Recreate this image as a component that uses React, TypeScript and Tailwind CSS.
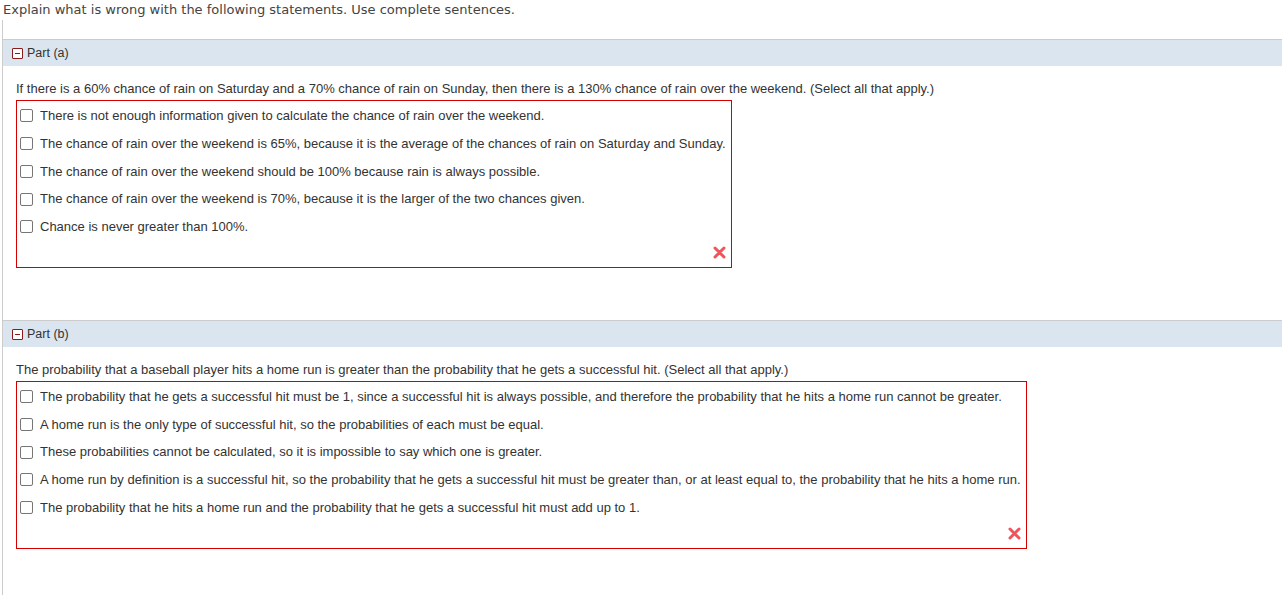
import React from 'react';

interface Part {
  label: string;
  question: string;
  options: string[];
}

const PARTS: Part[] = [
  {
    label: 'Part (a)',
    question:
      'If there is a 60% chance of rain on Saturday and a 70% chance of rain on Sunday, then there is a 130% chance of rain over the weekend. (Select all that apply.)',
    options: [
      'There is not enough information given to calculate the chance of rain over the weekend.',
      'The chance of rain over the weekend is 65%, because it is the average of the chances of rain on Saturday and Sunday.',
      'The chance of rain over the weekend should be 100% because rain is always possible.',
      'The chance of rain over the weekend is 70%, because it is the larger of the two chances given.',
      'Chance is never greater than 100%.',
    ],
  },
  {
    label: 'Part (b)',
    question:
      'The probability that a baseball player hits a home run is greater than the probability that he gets a successful hit. (Select all that apply.)',
    options: [
      'The probability that he gets a successful hit must be 1, since a successful hit is always possible, and therefore the probability that he hits a home run cannot be greater.',
      'A home run is the only type of successful hit, so the probabilities of each must be equal.',
      'These probabilities cannot be calculated, so it is impossible to say which one is greater.',
      'A home run by definition is a successful hit, so the probability that he gets a successful hit must be greater than, or at least equal to, the probability that he hits a home run.',
      'The probability that he hits a home run and the probability that he gets a successful hit must add up to 1.',
    ],
  },
];

function MinusBox() {
  return (
    <span className="flex h-[11px] w-[11px] items-center justify-center rounded-[1px] border border-[#8b1a1a] bg-white">
      <span className="h-[1px] w-[5px] bg-[#8b1a1a]" />
    </span>
  );
}

function WrongMark() {
  return (
    <svg width="13" height="13" viewBox="0 0 13 13">
      <path d="M2 2 L11 11 M11 2 L2 11" stroke="#f0545c" strokeWidth="3" strokeLinecap="round" />
    </svg>
  );
}

function PartBlock({ part }: { part: Part }) {
  return (
    <div>
      <div className="flex h-[27px] items-center gap-[4px] border-t border-[#cccccc] bg-[#dae5ef] pl-[9px] pt-[1px] text-[12.5px] text-[#333]">
        <MinusBox />
        <span>{part.label}</span>
      </div>
      <div className="pl-[13px] pt-[15px]">
        <p className="h-[19px] text-[13px] leading-[15px] text-[#333]">{part.question}</p>
        <div className="w-fit border border-[#d40000] pb-[8px] pl-[3px] pr-[5px] pt-[1px]">
          {part.options.map(opt => (
            <label key={opt} className="flex h-[27.75px] items-center gap-[7px] text-[13px] text-[#333]">
              <span className="h-[13px] w-[13px] shrink-0 rounded-[2px] border border-[#767676] bg-white" />
              <span>{opt}</span>
            </label>
          ))}
          <div className="mt-[5px] flex justify-end">
            <WrongMark />
          </div>
        </div>
      </div>
    </div>
  );
}

export default function App() {
  return (
    <div className="min-h-[595px] bg-white font-['Liberation_Sans',Arial,sans-serif]">
      <div className="h-[20px] pl-[3px] font-['DejaVu_Sans',Verdana,sans-serif] text-[13px] leading-[20px] text-[#444]">
        Explain what is wrong with the following statements. Use complete sentences.
      </div>
      <div className="ml-[2px] min-h-[575px] border-l border-[#cccccc] pt-[19px]">
        <PartBlock part={PARTS[0]} />
        <div className="h-[52px]" />
        <PartBlock part={PARTS[1]} />
      </div>
    </div>
  );
}
